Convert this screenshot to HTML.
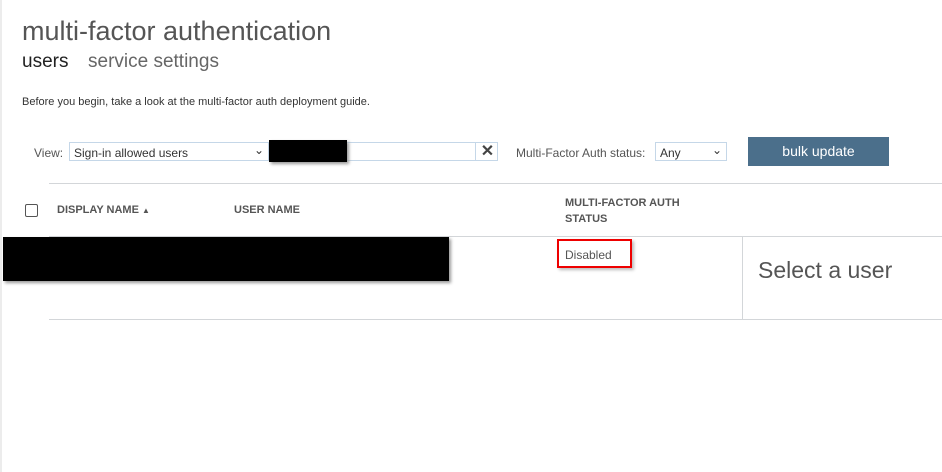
<!DOCTYPE html>
<html><head><style>
body{margin:0;width:942px;height:472px;background:#fff;font-family:"Liberation Sans",sans-serif;position:relative;overflow:hidden;color:#444}
.a{position:absolute;white-space:nowrap}
</style></head><body>
<div class="a" style="left:0;top:0;width:2px;height:472px;background:#ececec"></div>
<div class="a" style="left:22px;top:16px;font-size:27px;color:#555">multi-factor authentication</div>
<div class="a" style="left:22px;top:51px;font-size:19px;color:#222">users</div>
<div class="a" style="left:88px;top:51px;font-size:19px;color:#666">service settings</div>
<div class="a" style="left:22px;top:96px;font-size:11px;color:#333">Before you begin, take a look at the multi-factor auth deployment guide.</div>
<div class="a" style="left:34px;top:146px;font-size:12px;color:#555">View:</div>
<div class="a" style="left:69px;top:142px;width:200px;height:19px;border:1px solid #c5d7e8;box-sizing:border-box;font-size:12px;padding:3px 4px;color:#333">Sign-in allowed users<span style="position:absolute;right:4px;top:0;font-size:12px">&#8964;</span></div>
<div class="a" style="left:269px;top:142px;width:229px;height:19px;border:1px solid #c5d7e8;box-sizing:border-box"></div>
<div class="a" style="left:475px;top:142px;width:23px;height:19px;border-left:1px solid #c5d7e8;font-size:16px;font-weight:bold;text-align:center;line-height:19px;color:#444">✕</div>
<div class="a" style="left:269px;top:140px;width:78px;height:22px;background:#000;box-shadow:2px 2px 3px #999"></div>
<div class="a" style="left:516px;top:146px;font-size:12px;color:#555">Multi-Factor Auth status:</div>
<div class="a" style="left:655px;top:142px;width:72px;height:19px;border:1px solid #c5d7e8;box-sizing:border-box;font-size:12px;padding:3px 4px;color:#333">Any<span style="position:absolute;right:4px;top:0">&#8964;</span></div>
<div class="a" style="left:748px;top:137px;width:141px;height:29px;background:#4b6f8b;color:#fff;font-size:14px;text-align:center;line-height:29px">bulk update</div>
<div class="a" style="left:49px;top:183px;width:893px;height:1px;background:#d3d6d9"></div>
<div class="a" style="left:25px;top:204px;width:11px;height:11px;border:1px solid #555;border-radius:2px"></div>
<div class="a" style="left:57px;top:204px;font-size:11px;font-weight:bold;color:#555">DISPLAY NAME <span style="font-size:8px">▲</span></div>
<div class="a" style="left:234px;top:204px;font-size:11px;font-weight:bold;color:#555">USER NAME</div>
<div class="a" style="left:565px;top:195px;font-size:11px;font-weight:bold;color:#555;line-height:16px">MULTI-FACTOR AUTH<br>STATUS</div>
<div class="a" style="left:49px;top:236px;width:893px;height:1px;background:#d3d6d9"></div>
<div class="a" style="left:3px;top:237px;width:446px;height:44px;background:#000;box-shadow:2px 2px 3px #999"></div>
<div class="a" style="left:557px;top:239px;width:75px;height:29px;border:2px solid #e00;box-sizing:border-box;box-shadow:2px 2px 3px #bbb"></div>
<div class="a" style="left:565px;top:248px;font-size:12px;color:#555">Disabled</div>
<div class="a" style="left:742px;top:236px;width:1px;height:83px;background:#d3d6d9"></div>
<div class="a" style="left:758px;top:257px;font-size:23px;color:#555">Select a user</div>
<div class="a" style="left:49px;top:319px;width:893px;height:1px;background:#d3d6d9"></div>
</body></html>
